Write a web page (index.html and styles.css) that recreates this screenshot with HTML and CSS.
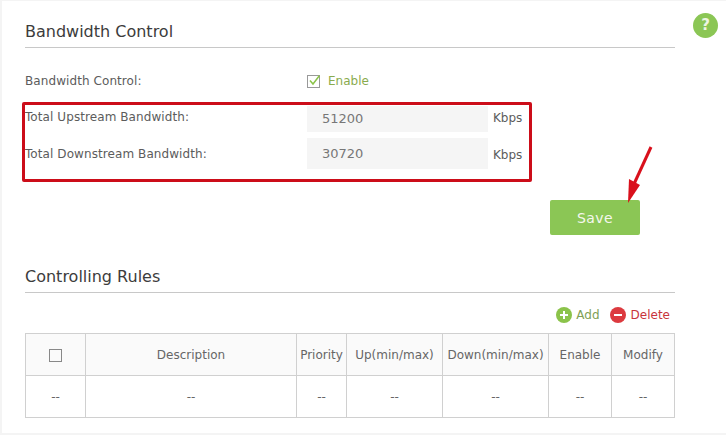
FILE: index.html
```html
<!DOCTYPE html>
<html lang="en">
<head>
    <meta charset="UTF-8">
    <title>Bandwidth Control</title>
    <link rel="stylesheet" href="styles.css">
</head>
<body>
    <div class="page">
        <div class="content">
            <h2 class="section-title">Bandwidth Control</h2>

            <div class="form-row enable-row">
                <span class="form-label">Bandwidth Control:</span>
                <svg class="check-box" width="14" height="14" viewBox="0 0 14 14">
                    <rect x="0.5" y="1.5" width="12" height="12" fill="none" stroke="#999"/>
                    <path d="M3 6.5 L6 10 L12.5 1.5" fill="none" stroke="#8bc34a" stroke-width="1.5"/>
                </svg>
                <span class="enable-text">Enable</span>
            </div>

            <div class="form-row up-row">
                <span class="form-label">Total Upstream Bandwidth:</span>
                <div class="text-input">51200</div>
                <span class="unit">Kbps</span>
            </div>

            <div class="form-row down-row">
                <span class="form-label">Total Downstream Bandwidth:</span>
                <div class="text-input tall">30720</div>
                <span class="unit">Kbps</span>
            </div>

            <div class="save-row">
                <button class="save-btn">Save</button>
            </div>

            <h2 class="section-title rules-title">Controlling Rules</h2>

            <div class="table-actions">
                <span class="action add">
                    <svg width="16" height="16" viewBox="0 0 16 16">
                        <circle cx="8" cy="8" r="8" fill="#8bc34a"/>
                        <path d="M8 4 V12 M4 8 H12" stroke="#fff" stroke-width="2"/>
                    </svg>
                    Add
                </span>
                <span class="action delete">
                    <svg width="16" height="16" viewBox="0 0 16 16">
                        <circle cx="8" cy="8" r="8" fill="#dc3a3f"/>
                        <path d="M4 8 H12" stroke="#fff" stroke-width="2"/>
                    </svg>
                    Delete
                </span>
            </div>

            <table class="rules">
                <colgroup>
                    <col class="col-check">
                    <col class="col-desc">
                    <col class="col-priority">
                    <col class="col-up">
                    <col class="col-down">
                    <col class="col-enable">
                    <col class="col-modify">
                </colgroup>
                <thead>
                    <tr>
                        <th><span class="head-check"></span></th>
                        <th>Description</th>
                        <th>Priority</th>
                        <th>Up(min/max)</th>
                        <th>Down(min/max)</th>
                        <th>Enable</th>
                        <th>Modify</th>
                    </tr>
                </thead>
                <tbody>
                    <tr>
                        <td>--</td>
                        <td>--</td>
                        <td>--</td>
                        <td>--</td>
                        <td>--</td>
                        <td>--</td>
                        <td>--</td>
                    </tr>
                </tbody>
            </table>
        </div>

        <div class="help">?</div>

        <!-- annotations on top of the screenshot -->
        <div class="red-box"></div>
        <svg class="red-arrow" width="40" height="70" viewBox="0 0 40 70">
            <path d="M33 7 L16 44" stroke="#d9101c" stroke-width="3" fill="none"/>
            <path d="M10 63 L11 39 L22 45 Z" fill="#d9101c"/>
        </svg>
    </div>
</body>
</html>
```

FILE: styles.css
```css
* {
    box-sizing: border-box;
}

body {
    margin: 0;
    background-color: #f4f4f4;
    font-family: "DejaVu Sans", Verdana, sans-serif;
    font-size: 12px;
    color: #5c5c5c;
}

.page {
    position: relative;
    display: flex;
    align-items: flex-start;
    height: 432px;
    margin: 1px 0 0 2px;
    padding: 0 8px 0 23px;
    background-color: #fff;
}

.content {
    width: 650px;
}

.section-title {
    height: 47px;
    margin: 0;
    padding-top: 21px;
    border-bottom: 1px solid #c8c8c8;
    font-size: 16px;
    line-height: 20px;
    font-weight: normal;
    color: #3c3c3c;
}

.form-row {
    display: flex;
    align-items: center;
}

.form-label {
    width: 282px;
    letter-spacing: 0.08px;
}

.enable-row {
    height: 26px;
    margin-top: 20px;
}

.check-box {
    margin-right: 7px;
}

.enable-text {
    color: #8aab4e;
}

.up-row {
    height: 26px;
    margin-top: 12px;
}

.up-row .form-label {
    padding-bottom: 4px;
}

.up-row .unit {
    padding-bottom: 2px;
}

.down-row {
    height: 31px;
    margin-top: 6px;
}

.down-row .unit {
    padding-top: 2px;
}

.text-input {
    width: 181px;
    height: 100%;
    padding-left: 15px;
    margin-right: 5px;
    background-color: #f5f5f5;
    font-size: 13px;
    line-height: 26px;
    color: #777;
}

.text-input.tall {
    line-height: 31px;
}

.save-row {
    display: flex;
    justify-content: flex-end;
    padding-right: 35px;
    margin-top: 31px;
}

.save-btn {
    width: 90px;
    height: 35px;
    padding: 0;
    border: none;
    border-radius: 2px;
    background-color: #8bc655;
    color: #f4f7ee;
    font-family: inherit;
    font-size: 14px;
    font-weight: normal;
    letter-spacing: 0.4px;
}

.rules-title {
    margin-top: 11px;
}

.table-actions {
    display: flex;
    justify-content: flex-end;
    gap: 10px;
    height: 16px;
    margin-top: 14px;
    padding-right: 5px;
}

.action {
    display: flex;
    align-items: center;
    gap: 5px;
}

.action.add {
    gap: 4px;
    color: #7f9f55;
}

.action.delete {
    color: #c8343c;
}

.rules {
    width: 649px;
    margin-top: 10px;
    border-collapse: collapse;
    table-layout: fixed;
}

.col-check { width: 60px; }
.col-desc { width: 211px; }
.col-priority { width: 50px; }
.col-up { width: 96px; }
.col-down { width: 106px; }
.col-enable { width: 63px; }
.col-modify { width: 63px; }

.rules th,
.rules td {
    padding: 0;
    border: 1px solid #d0d0d0;
    text-align: center;
    font-size: 12px;
    font-weight: normal;
    color: #666;
    white-space: nowrap;
}

.rules th {
    height: 42px;
    background-color: #fafafa;
}

.rules td {
    height: 42px;
}

.head-check {
    display: inline-block;
    width: 13px;
    height: 13px;
    border: 1px solid #888;
    vertical-align: middle;
}

.help {
    width: 25px;
    height: 25px;
    margin: 12px 0 0 18px;
    border-radius: 50%;
    background-color: #8bc655;
    color: #eef5e2;
    font-size: 15px;
    font-weight: bold;
    line-height: 25px;
    text-align: center;
}

.red-box {
    position: absolute;
    left: 20px;
    top: 101px;
    width: 510px;
    height: 80px;
    border: 3px solid #cc0d19;
    border-radius: 2px;
}

.red-arrow {
    position: absolute;
    left: 616px;
    top: 139px;
}
```
